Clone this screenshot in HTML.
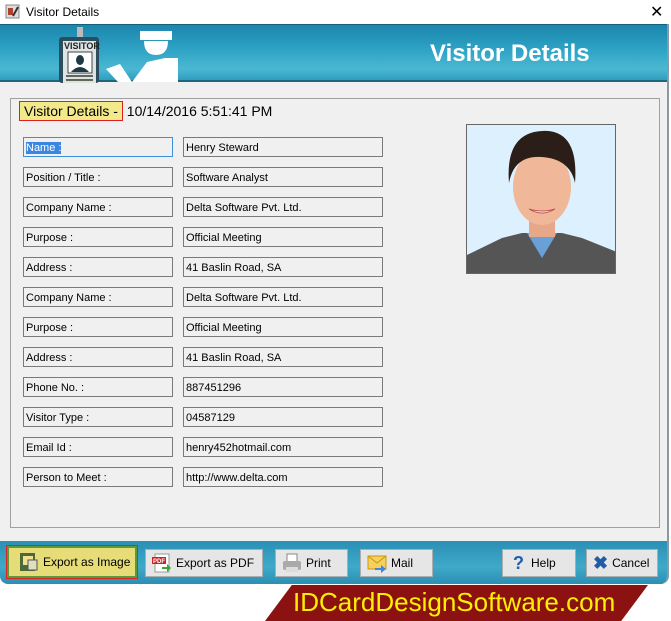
<!DOCTYPE html>
<html><head><meta charset="utf-8"><style>
*{margin:0;padding:0;box-sizing:border-box}
body{width:671px;height:621px;background:#fff;font-family:"Liberation Sans",Arial,sans-serif;position:relative;overflow:hidden}
.title{position:absolute;left:0;top:0;width:671px;height:24px;background:#fff;font-size:12px}
.title span{position:absolute;left:26px;top:5px}
.win{position:absolute;left:0;top:24px;width:669px;height:560px;background:#f0f0f0;border-right:2px solid #8a9aa5;border-radius:0 0 8px 8px;overflow:hidden}
.banner{position:absolute;left:0;top:0;width:669px;height:58px;background:linear-gradient(180deg,#1b86ad 0%,#2ea3c5 45%,#4bb8d2 80%,#2f9dbf 100%);border-top:1px solid #17607c;border-bottom:2px solid #1e6680}
.banner .t{position:absolute;left:430px;top:15px;color:#fff;font-weight:bold;font-size:24px;font-family:"Liberation Sans",sans-serif}
.group{position:absolute;left:10px;top:74px;width:650px;height:430px;border:1px solid #a0a0a0}
.hdr{position:absolute;left:19px;top:103px;font-size:14px}
.hdr b{font-weight:normal;background:#f3e98a;border:1px solid #e02020;padding:1px 4px}
.f{position:absolute;height:20px;border:1px solid #7a7a7a;font-size:11px;padding:4px 0 0 2px;background:#f0f0f0}
.l{left:23px;width:150px}.v{left:183px;width:200px}
.photo{position:absolute;left:466px;top:124px;width:150px;height:150px;border:1px solid #666;background:#dcf0fd;overflow:hidden}
.bar{position:absolute;left:0;top:517px;width:669px;height:43px;background:linear-gradient(180deg,#2a8fb5,#3fa9c9 60%,#2c8fb3)}
.btn{position:absolute;top:549px;height:28px;background:#e6e6e6;border:1px solid #adadad;font-size:12px;display:flex;align-items:center;gap:4px;padding-left:6px}
.ic{width:20px;height:20px;display:inline-block}
.red{position:absolute;left:265px;top:585px;width:383px;height:36px;background:#8c1212;clip-path:polygon(7% 0,100% 0,93% 100%,0 100%)}
.red span{position:absolute;left:28px;top:2px;color:#ffef00;font-size:26px}
</style></head><body>
<div class="title"><svg style="position:absolute;left:5px;top:4px" width="15" height="15"><rect x="1" y="1" width="13" height="13" fill="#ddd" stroke="#888"/><rect x="3" y="4" width="5" height="7" fill="#b04030"/><path d="M8 12l5-9" stroke="#333" stroke-width="2"/></svg><span>Visitor Details</span><span style="left:650px;top:2px;font-size:16px">✕</span></div>
<div class="win">
<div class="banner">
<svg width="200" height="58" style="position:absolute;left:0;top:0">
<rect x="59" y="12" width="40" height="46" rx="3" fill="#2c4d5c"/>
<rect x="63" y="16" width="33" height="42" fill="#dde4e6"/>
<text x="64" y="24" font-size="9" font-weight="bold" fill="#222" font-family="Liberation Sans">VISITOR</text>
<rect x="68" y="27" width="24" height="21" fill="#fff" stroke="#444"/>
<ellipse cx="80" cy="35" rx="4" ry="5" fill="#1f3a45"/><path d="M71 47q9-10 18 0z" fill="#1f3a45"/>
<rect x="66" y="50" width="27" height="2" fill="#665"/><rect x="66" y="54" width="27" height="2" fill="#665"/>
<rect x="77" y="2" width="6" height="10" fill="#bbb"/>
<path d="M140 6h32v9h-32z M144 16h24q0 14-12 14t-12-14z" fill="#fff"/>
<path d="M106 44l14-5 12 18h-14z M132 57l15-20 18-4 13 0v24z" fill="#fff"/>
</svg>
<div class="t">Visitor Details</div></div>
<div class="group"></div>
<div class="bar"></div>
</div>
<div class="hdr"><b>Visitor Details -</b> 10/14/2016 5:51:41 PM</div>

<div class="f l" style="top:137px;border-color:#3c8fd8"><span style="background:#3a86e0;color:#fff">Name :</span></div><div class="f v" style="top:137px">Henry Steward</div>
<div class="f l" style="top:167px">Position / Title :</div><div class="f v" style="top:167px">Software Analyst</div>
<div class="f l" style="top:197px">Company Name :</div><div class="f v" style="top:197px">Delta Software Pvt. Ltd.</div>
<div class="f l" style="top:227px">Purpose :</div><div class="f v" style="top:227px">Official Meeting</div>
<div class="f l" style="top:257px">Address :</div><div class="f v" style="top:257px">41 Baslin Road, SA</div>
<div class="f l" style="top:287px">Company Name :</div><div class="f v" style="top:287px">Delta Software Pvt. Ltd.</div>
<div class="f l" style="top:317px">Purpose :</div><div class="f v" style="top:317px">Official Meeting</div>
<div class="f l" style="top:347px">Address :</div><div class="f v" style="top:347px">41 Baslin Road, SA</div>
<div class="f l" style="top:377px">Phone No. :</div><div class="f v" style="top:377px">887451296</div>
<div class="f l" style="top:407px">Visitor Type :</div><div class="f v" style="top:407px">04587129</div>
<div class="f l" style="top:437px">Email Id :</div><div class="f v" style="top:437px">henry452hotmail.com</div>
<div class="f l" style="top:467px">Person to Meet :</div><div class="f v" style="top:467px">http://www.delta.com</div>

<div class="photo"><svg width="150" height="150">
<path d="M0 150v-20l35-17 20-5h40l20 5 35 14v23z" fill="#555"/>
<path d="M60 108l15 25 15-25z" fill="#6aa0d8"/>
<rect x="62" y="90" width="26" height="22" fill="#e6a888"/>
<ellipse cx="75" cy="62" rx="29" ry="38" fill="#f0b898"/>
<path d="M42 58q-4-50 33-52t33 52q-5-24-33-26t-33 26z" fill="#2b1e18"/>
<path d="M62 84q13 8 26 0q-13 4-26 0z" fill="#fff" stroke="#b55" stroke-width="1"/>
</svg></div>

<div class="btn" style="left:6px;top:545px;width:132px;height:34px;background:#e6dc78;border:1px solid #d22;box-shadow:inset 0 0 0 2px #5a9a3a;padding-left:12px"><svg class="ic" viewBox="0 0 20 20"><rect x="1" y="1" width="15" height="18" fill="#4a6a3a"/><rect x="4" y="4" width="10" height="9" fill="#f0e090"/><rect x="9" y="8" width="9" height="10" fill="#e0e0c0" stroke="#555"/></svg>Export as Image</div>
<div class="btn" style="left:145px;width:118px"><svg class="ic" viewBox="0 0 20 20"><rect x="3" y="1" width="14" height="18" fill="#fff" stroke="#999"/><rect x="0" y="4" width="14" height="7" fill="#c22"/><text x="1" y="10" font-size="6" fill="#fff" font-family="Liberation Sans" font-weight="bold">PDF</text><path d="M10 14h5v-3l4 4-4 4v-3h-5z" fill="#3a3"/></svg>Export as PDF</div>
<div class="btn" style="left:275px;width:73px"><svg class="ic" viewBox="0 0 20 20"><rect x="5" y="1" width="10" height="8" fill="#fff" stroke="#888"/><rect x="1" y="8" width="18" height="9" rx="2" fill="#aaa"/><rect x="4" y="14" width="12" height="5" fill="#ddd"/></svg>Print</div>
<div class="btn" style="left:360px;width:73px"><svg class="ic" viewBox="0 0 20 20"><rect x="1" y="3" width="18" height="13" fill="#f3d060" stroke="#c90"/><path d="M1 3l9 7 9-7" stroke="#c90" fill="none"/><path d="M8 15h6v-3l5 4-5 4v-3h-6z" fill="#3a86e0"/></svg>Mail</div>
<div class="btn" style="left:502px;width:74px;padding-left:10px"><span style="color:#1e5ea8;font-weight:bold;font-size:18px;width:14px">?</span>Help</div>
<div class="btn" style="left:586px;width:72px;padding-left:6px"><span style="color:#1e5ea8;font-weight:bold;font-size:18px">✖</span>Cancel</div>

<div class="red"><span>IDCardDesignSoftware.com</span></div>
</body></html>
